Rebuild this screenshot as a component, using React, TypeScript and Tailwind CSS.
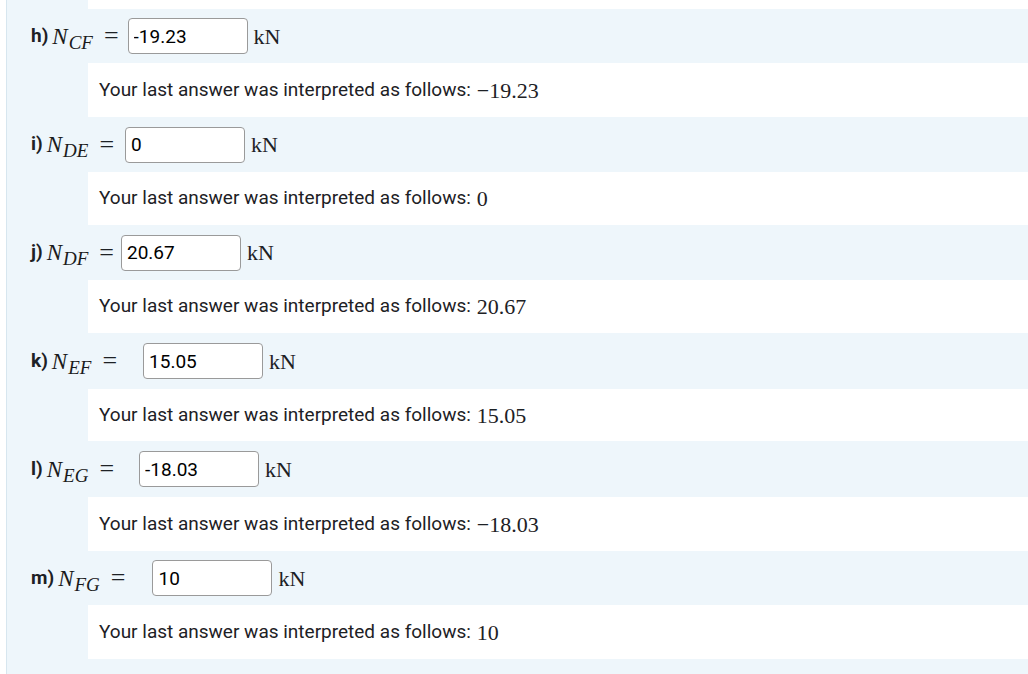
import React from "react";

type Part = {
    label: string;
    sub: string;
    value: string;
    shown: string;
    gap: number;
    rowH: number;
    fbH: number;
};

const parts: Part[] = [
    { label: "h)", sub: "CF", value: "-19.23", shown: "\u221219.23", gap: 7, rowH: 54, fbH: 54 },
    { label: "i)", sub: "DE", value: "0", shown: "0", gap: 9, rowH: 55, fbH: 53 },
    { label: "j)", sub: "DF", value: "20.67", shown: "20.67", gap: 5, rowH: 55, fbH: 53 },
    { label: "k)", sub: "EF", value: "15.05", shown: "15.05", gap: 24, rowH: 56, fbH: 52 },
    { label: "l)", sub: "EG", value: "-18.03", shown: "\u221218.03", gap: 23, rowH: 56, fbH: 54 },
    { label: "m)", sub: "FG", value: "10", shown: "10", gap: 25, rowH: 54, fbH: 54 },
];

const serif = "font-['Liberation_Serif','DejaVu_Serif',serif]";

function Symbol({ sub }: { sub: string }) {
    return (
        <span className={`${serif} italic text-[23px] leading-none text-[#1b1b1b]`}>
            N<span className="inline-block text-[19px] translate-y-[5px] ml-[1px]">{sub}</span>
        </span>
    );
}

export default function App() {
    return (
        <div className="min-h-screen bg-white font-['Roboto','Liberation_Sans',sans-serif] text-[#1d2125]">
            <div className="ml-[6px] border-l border-[#d7e6ef] bg-[#eef6fb] pb-[15px]">
                {/* tail of the previous feedback box */}
                <div className="ml-[81px] h-[9px] bg-white" />

                {parts.map((p) => (
                    <div key={p.label}>
                        {/* question row */}
                        <div className="flex items-center pl-[24px]" style={{ height: p.rowH }}>
                            <span className="text-[19px] font-bold mr-[4px]">{p.label}</span>
                            <Symbol sub={p.sub} />
                            <span className={`${serif} text-[26px] leading-none ml-[11px] mr-[2px]`}>=</span>
                            <input
                                readOnly
                                value={p.value}
                                style={{ marginLeft: p.gap }}
                                className="w-[120px] h-[36px] rounded-[4px] border border-[#9a9a9a] bg-white pl-[5px] text-[19px] text-black outline-none"
                            />
                            <span className={`${serif} text-[22px] ml-[6px]`}>kN</span>
                        </div>

                        {/* feedback */}
                        <div
                            className="ml-[81px] flex items-center bg-white pl-[11px] text-[19px]"
                            style={{ height: p.fbH }}
                        >
                            Your last answer was interpreted as follows:
                            <span className={`${serif} text-[22px] ml-[6px]`}>{p.shown}</span>
                        </div>
                    </div>
                ))}
            </div>
        </div>
    );
}
